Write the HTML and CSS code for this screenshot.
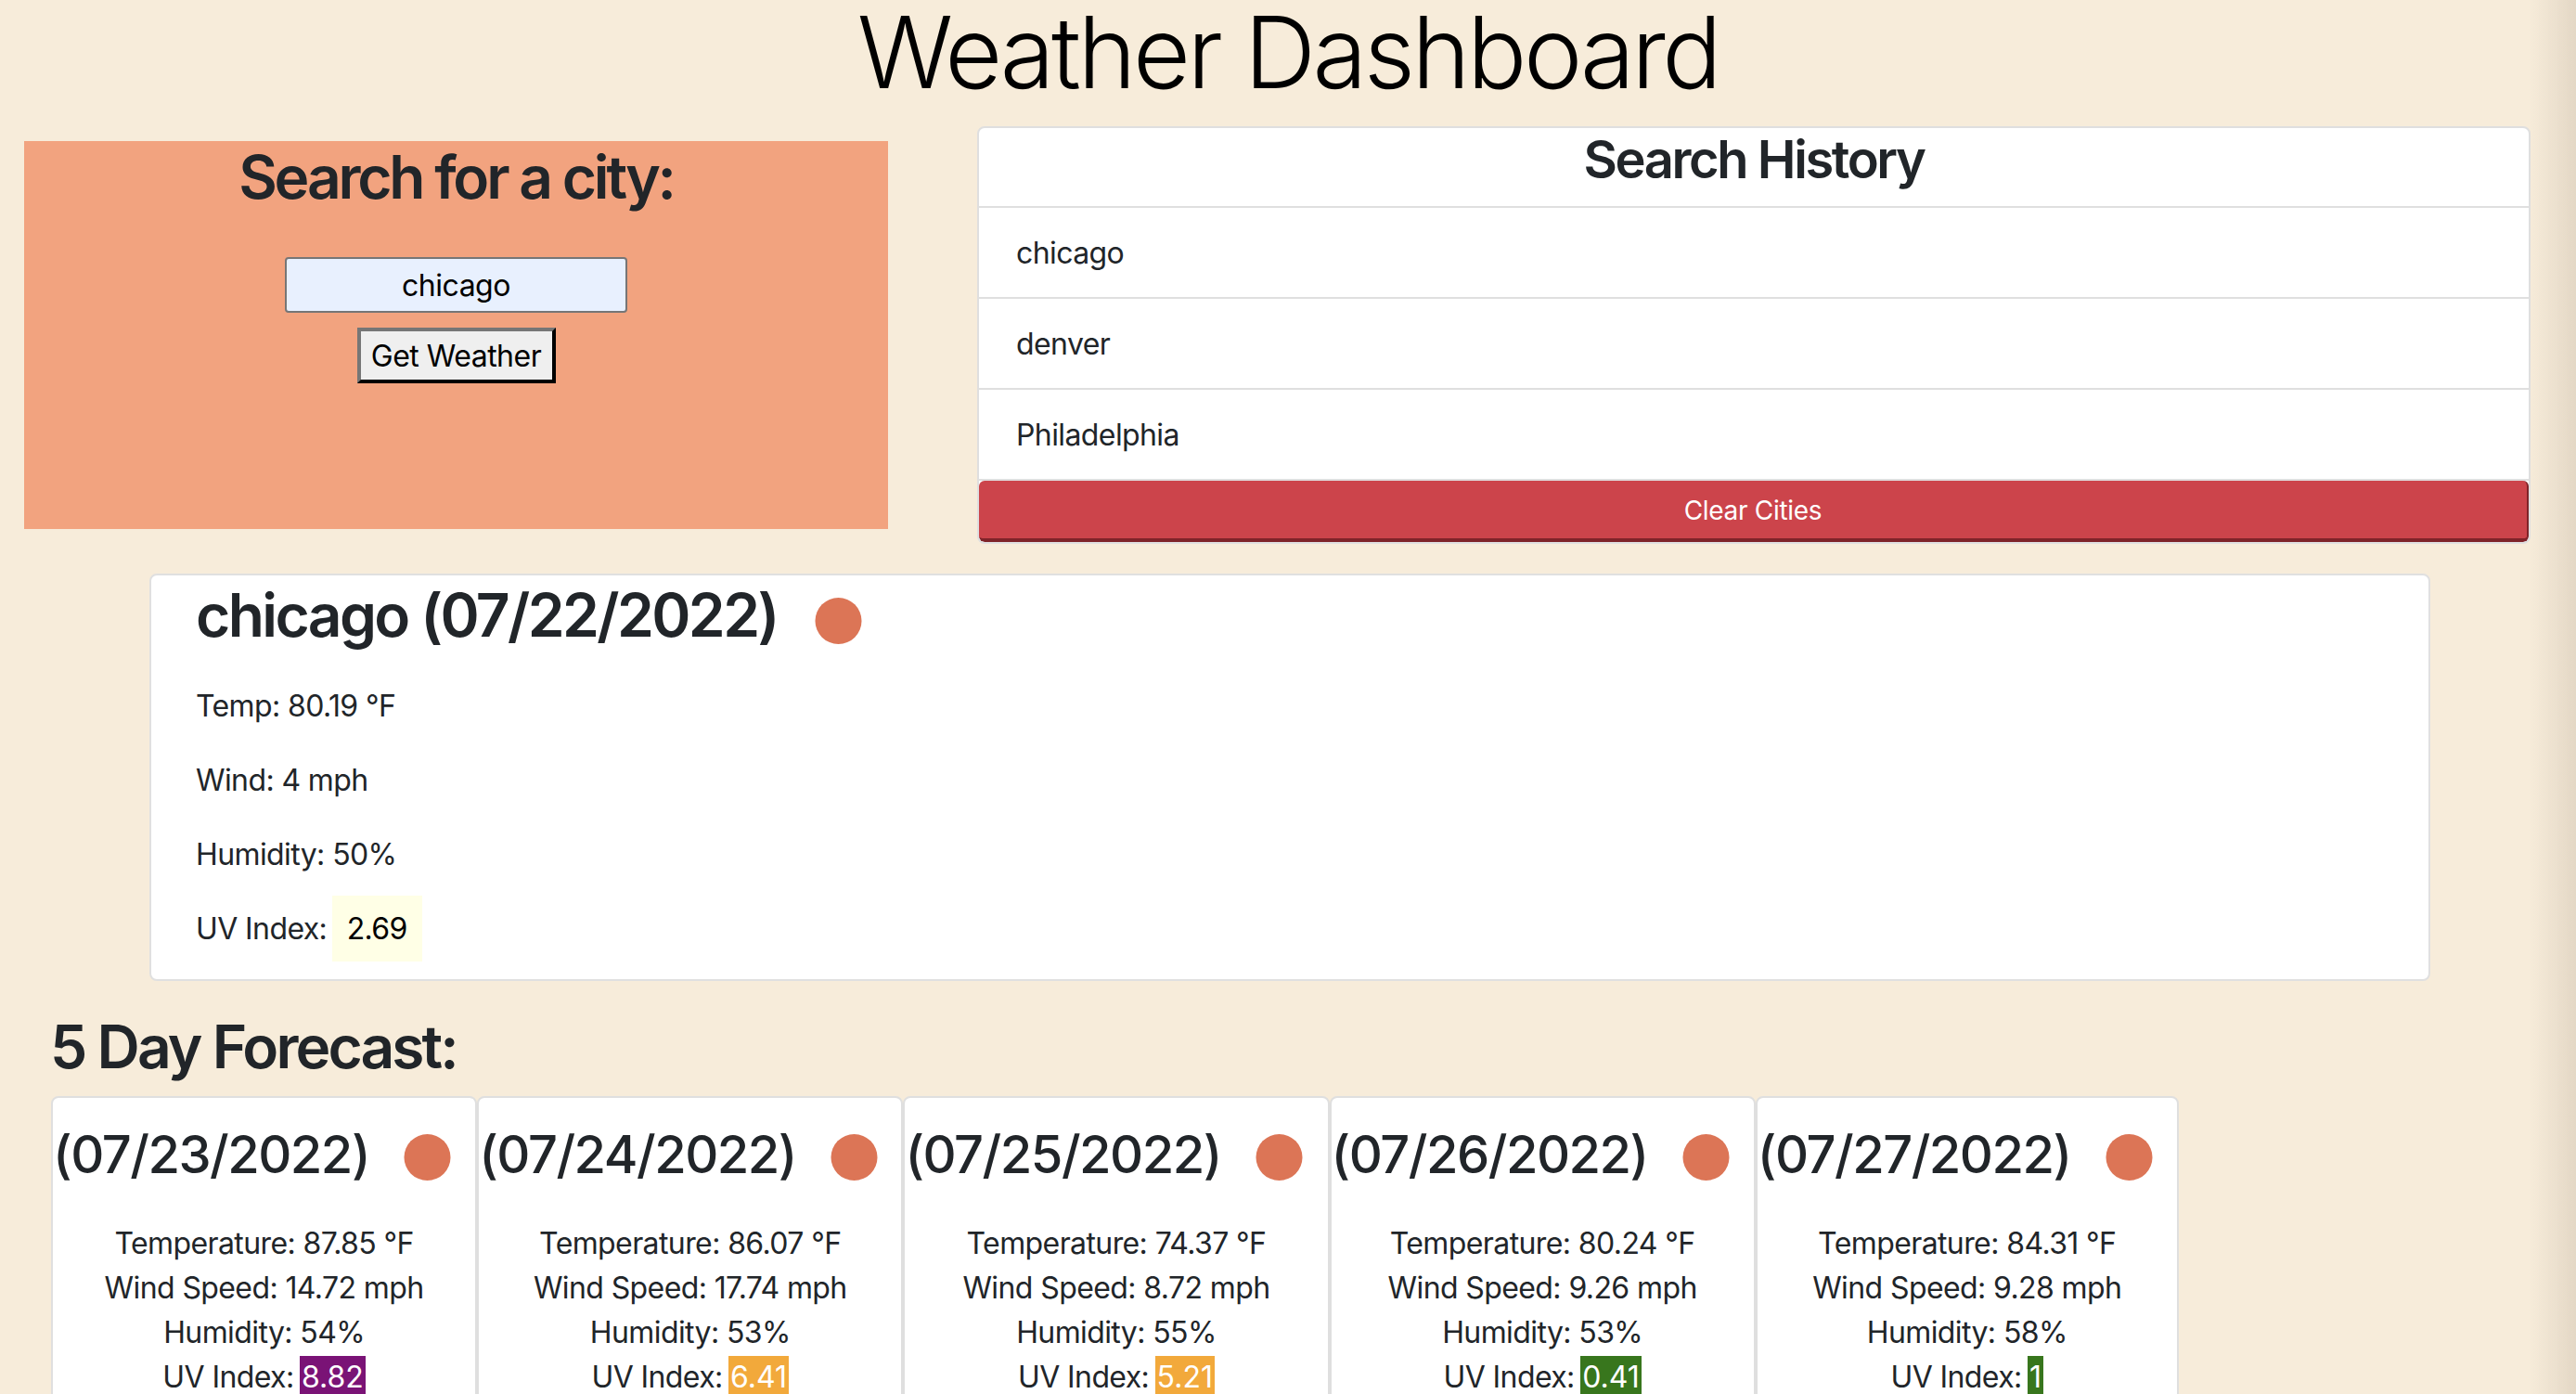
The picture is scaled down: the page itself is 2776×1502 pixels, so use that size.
FILE: index.html
```html
<!DOCTYPE html>
<html lang="en">
<head>
<meta charset="utf-8">
<title>Weather Dashboard</title>
<link rel="stylesheet" href="styles.css">
</head>
<body>
<h1 class="page-title">Weather Dashboard</h1>
<div class="top-row">
  <section class="search-panel">
    <h2 class="search-title">Search for a city:</h2>
    <input class="city-input" type="text" value="chicago">
    <button class="get-btn" type="button">Get Weather</button>
  </section>
  <section class="history">
    <h3 class="history-title">Search History</h3>
    <div class="history-item">chicago</div>
    <div class="history-item">denver</div>
    <div class="history-item">Philadelphia</div>
    <button class="clear-btn" type="button">Clear Cities</button>
  </section>
</div>
<section class="today">
  <h2 class="today-title">chicago (07/22/2022) <svg class="wx wx-large" viewBox="0 0 52 52"><circle cx="26" cy="26" r="25.5"/></svg></h2>
  <p class="today-line">Temp: 80.19 °F</p>
  <p class="today-line">Wind: 4 mph</p>
  <p class="today-line">Humidity: 50%</p>
  <p class="today-line">UV Index: <span class="uv-today">2.69</span></p>
</section>
<h2 class="forecast-title">5 Day Forecast:</h2>
<div class="forecast">
  <article class="day">
    <h3 class="day-date">(07/23/2022) <svg class="wx" viewBox="0 0 52 52"><circle cx="26" cy="26" r="25.5"/></svg></h3>
    <p class="day-line">Temperature: 87.85 °F</p>
    <p class="day-line">Wind Speed: 14.72 mph</p>
    <p class="day-line">Humidity: 54%</p>
    <p class="day-line">UV Index: <span class="uv uv-purple">8.82</span></p>
  </article>
  <article class="day">
    <h3 class="day-date">(07/24/2022) <svg class="wx" viewBox="0 0 52 52"><circle cx="26" cy="26" r="25.5"/></svg></h3>
    <p class="day-line">Temperature: 86.07 °F</p>
    <p class="day-line">Wind Speed: 17.74 mph</p>
    <p class="day-line">Humidity: 53%</p>
    <p class="day-line">UV Index: <span class="uv uv-orange">6.41</span></p>
  </article>
  <article class="day">
    <h3 class="day-date">(07/25/2022) <svg class="wx" viewBox="0 0 52 52"><circle cx="26" cy="26" r="25.5"/></svg></h3>
    <p class="day-line">Temperature: 74.37 °F</p>
    <p class="day-line">Wind Speed: 8.72 mph</p>
    <p class="day-line">Humidity: 55%</p>
    <p class="day-line">UV Index: <span class="uv uv-orange">5.21</span></p>
  </article>
  <article class="day">
    <h3 class="day-date">(07/26/2022) <svg class="wx" viewBox="0 0 52 52"><circle cx="26" cy="26" r="25.5"/></svg></h3>
    <p class="day-line">Temperature: 80.24 °F</p>
    <p class="day-line">Wind Speed: 9.26 mph</p>
    <p class="day-line">Humidity: 53%</p>
    <p class="day-line">UV Index: <span class="uv uv-green">0.41</span></p>
  </article>
  <article class="day">
    <h3 class="day-date">(07/27/2022) <svg class="wx" viewBox="0 0 52 52"><circle cx="26" cy="26" r="25.5"/></svg></h3>
    <p class="day-line">Temperature: 84.31 °F</p>
    <p class="day-line">Wind Speed: 9.28 mph</p>
    <p class="day-line">Humidity: 58%</p>
    <p class="day-line">UV Index: <span class="uv uv-green">1</span></p>
  </article>
</div>
<div class="edge-shade"></div>
</body>
</html>
```

FILE: styles.css
```css
* { box-sizing: border-box; }
html, body { height: 100%; overflow: hidden; }
body {
  margin: 0;
  background: #f7ecda;
  color: #212529;
  font-family: Inter, "Liberation Sans", sans-serif;
  font-size: 32px;
  line-height: 48px;
  letter-spacing: -0.6px;
}
h1, h2, h3, p { margin: 0; }
.page-title {
  height: 136px;
  text-align: center;
  font-size: 107px;
  font-weight: 300;
  line-height: 112px;
  letter-spacing: -3.5px;
  color: #000;
}
.top-row { display: flex; align-items: flex-start; padding-left: 26px; }
.search-panel {
  width: 931px;
  height: 418px;
  margin-top: 16px;
  margin-right: 96px;
  background: #f2a37f;
  display: flex;
  flex-direction: column;
  align-items: center;
}
.search-title {
  height: 125px;
  font-size: 64px;
  font-weight: 600;
  line-height: 78px;
  letter-spacing: -3.2px;
}
.city-input {
  width: 369px;
  height: 60px;
  border: 2px solid #767676;
  border-radius: 4px;
  background: #e8f0fe;
  color: #000;
  font: 32px Inter, "Liberation Sans", sans-serif;
  letter-spacing: -0.5px;
  text-align: center;
  padding: 2px 4px;
}
.get-btn {
  width: 214px;
  height: 60px;
  margin-top: 16px;
  padding: 0;
  border: 4px outset #767676;
  border-color: #767676 #212121 #212121 #767676;
  background: #efefef;
  color: #000;
  font: 32px Inter, "Liberation Sans", sans-serif;
  letter-spacing: -0.5px;
}
.history {
  width: 1674px;
  height: 450px;
  background: #fff;
  border: 2px solid #dfdfdf;
  border-radius: 8px;
  overflow: hidden;
}
.history-title {
  height: 86px;
  border-bottom: 2px solid #dfdfdf;
  text-align: center;
  font-size: 56px;
  font-weight: 600;
  line-height: 68px;
  letter-spacing: -2.4px;
}
.history-item {
  height: 98px;
  padding: 25px 40px 23px;
  border-bottom: 2px solid #dfdfdf;
}
.clear-btn {
  display: block;
  width: 100%;
  height: 66px;
  padding: 2px 0 0;
  border: 0;
  border-right: 2px solid #7f2329;
  border-bottom: 4px solid #7f2329;
  border-radius: 6px;
  background: #cc444b;
  color: #fff;
  font: 28px Inter, "Liberation Sans", sans-serif;
  letter-spacing: -0.3px;
}
.today {
  width: 2458px;
  height: 439px;
  margin: 32px 0 0 161px;
  padding: 0 48px;
  background: #fff;
  border: 2px solid #e0e0e0;
  border-radius: 8px;
}
.today-title {
  height: 117px;
  font-size: 64px;
  font-weight: 600;
  line-height: 86px;
  letter-spacing: -2.6px;
}
.today-line { margin-bottom: 32px; }
.uv-today { padding: 16px; margin-left: -3px; background: #ffffe6; color: #000; }
.wx { width: 51px; height: 52px; margin-left: 24px; vertical-align: -9px; }
.wx-large { margin-left: 27px; }
.wx circle { fill: #dc7556; }
.forecast-title {
  padding: 35px 0 0 54px;
  height: 124px;
  font-size: 64px;
  font-weight: 600;
  line-height: 72px;
  letter-spacing: -2.9px;
}
.forecast { display: flex; padding-left: 55px; }
.day {
  width: 459.2px;
  flex: none;
  height: 500px;
  background: #fff;
  border: 2px solid #dfdfdf;
  border-radius: 8px;
  text-align: center;
}
.day:last-child { width: 456px; }
.day-date {
  height: 133px;
  padding: 29px 0 0;
  text-align: left;
  font-size: 56px;
  font-weight: 500;
  line-height: 64px;
  letter-spacing: -1.5px;
  white-space: nowrap;
}
.day-line { line-height: 48px; }
.uv { color: #fff; padding: 3px 2px 0; margin-left: -2px; letter-spacing: 0; }
.uv-purple { background: #7a1376; }
.uv-orange { background: #f2a93b; }
.uv-green { background: #38761d; }
.edge-shade {
  position: fixed;
  top: 0;
  right: 0;
  bottom: 0;
  width: 50px;
  background: linear-gradient(to right, rgba(227,215,197,0), #e3d7c5);
  pointer-events: none;
}
```
